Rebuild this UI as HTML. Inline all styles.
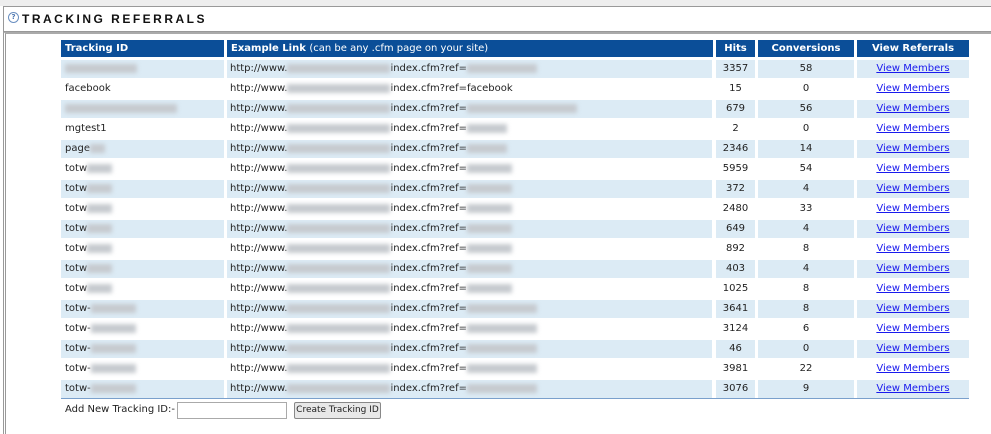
<!DOCTYPE html>
<html><head><style>
body{margin:0;width:991px;height:421px;background:#fff;font-family:"DejaVu Sans","Liberation Sans",sans-serif;font-size:10px;color:#222;position:relative;overflow:hidden}
.top{position:absolute;left:0;top:0;width:991px;height:6px;background:#eee}
.box1{position:absolute;left:3px;top:6px;width:990px;height:24px;border:1px solid #999;border-right:none;}
.box2{position:absolute;left:3px;top:32px;width:990px;height:400px;border-top:2px solid #aaa;border-left:3px double #999}
.title{position:absolute;left:22px;top:12px;font-family:"Liberation Sans",sans-serif;font-weight:bold;font-size:12px;letter-spacing:2.5px;color:#111}
.q{position:absolute;left:8px;top:12px;width:9px;height:9px;border:1px solid #6a8fc0;border-radius:50%;font-size:7px;line-height:9px;text-align:center;color:#4a75b0;font-weight:bold}
.c{position:absolute;height:18px;line-height:18px;white-space:nowrap;overflow:hidden}
.h{background:#0b4e98;color:#fff;font-weight:bold;height:17px;line-height:17px}
.b{display:inline-block;height:9px;background:#c6cacf;filter:blur(2px);vertical-align:middle}
a{color:#1a1aee;text-decoration:underline}
.line{position:absolute;left:61px;top:398px;width:908px;height:1px;background:#7aa0cc}
</style></head><body>
<div class="top"></div>
<div class="box1"></div>
<div class="q">?</div>
<div class="title">TRACKING REFERRALS</div>
<div class="box2"></div>
<div id="t"></div>
<div class="c h" style="left:61px;top:40px;width:159px;padding-left:4px">Tracking ID</div>
<div class="c h" style="left:227px;top:40px;width:482px;padding-left:4px">Example Link <span style="font-weight:normal">(can be any .cfm page on your site)</span></div>
<div class="c h" style="left:716px;top:40px;width:39px;text-align:center">Hits</div>
<div class="c h" style="left:758px;top:40px;width:96px;text-align:center">Conversions</div>
<div class="c h" style="left:857px;top:40px;width:112px;text-align:center">View Referrals</div>
<script>
var rows=[["",'<span class="b" style="width:72px"></span>',"",'<span class="b" style="width:70px"></span>',3357,58],
["facebook","","","facebook",15,0],
["",'<span class="b" style="width:112px"></span>',"",'<span class="b" style="width:110px"></span>',679,56],
["mgtest1","","",'<span class="b" style="width:40px"></span>',2,0],
["page",'<span class="b" style="width:15px"></span>',"",'<span class="b" style="width:40px"></span>',2346,14],
["totw",'<span class="b" style="width:25px"></span>',"",'<span class="b" style="width:45px"></span>',5959,54],
["totw",'<span class="b" style="width:25px"></span>',"",'<span class="b" style="width:45px"></span>',372,4],
["totw",'<span class="b" style="width:25px"></span>',"",'<span class="b" style="width:45px"></span>',2480,33],
["totw",'<span class="b" style="width:25px"></span>',"",'<span class="b" style="width:45px"></span>',649,4],
["totw",'<span class="b" style="width:25px"></span>',"",'<span class="b" style="width:45px"></span>',892,8],
["totw",'<span class="b" style="width:25px"></span>',"",'<span class="b" style="width:45px"></span>',403,4],
["totw",'<span class="b" style="width:25px"></span>',"",'<span class="b" style="width:45px"></span>',1025,8],
["totw-",'<span class="b" style="width:45px"></span>',"",'<span class="b" style="width:70px"></span>',3641,8],
["totw-",'<span class="b" style="width:45px"></span>',"",'<span class="b" style="width:70px"></span>',3124,6],
["totw-",'<span class="b" style="width:45px"></span>',"",'<span class="b" style="width:70px"></span>',46,0],
["totw-",'<span class="b" style="width:45px"></span>',"",'<span class="b" style="width:70px"></span>',3981,22],
["totw-",'<span class="b" style="width:45px"></span>',"",'<span class="b" style="width:70px"></span>',3076,9]];
var h="";
rows.forEach(function(r,i){var y=60+20*i;var bg=i%2==0?"#dcebf5":"#fff";var s="top:"+y+"px;background:"+bg+";";
h+='<div class="c" style="'+s+'left:61px;width:159px;padding-left:4px">'+r[0]+r[1]+'</div>';
h+='<div class="c" style="'+s+'left:227px;width:482px;padding-left:3px">http://www.<span class="b" style="width:103px"></span>index.cfm?ref='+r[3]+'</div>';
h+='<div class="c" style="'+s+'left:716px;width:39px;text-align:center">'+r[4]+'</div>';
h+='<div class="c" style="'+s+'left:758px;width:96px;text-align:center">'+r[5]+'</div>';
h+='<div class="c" style="'+s+'left:857px;width:112px;text-align:center"><a>View Members</a></div>';});
document.getElementById("t").innerHTML=h;
</script>
<div class="line"></div>
<div style="position:absolute;left:65px;top:404px">Add New Tracking ID:-</div>
<div style="position:absolute;left:177px;top:402px;width:108px;height:15px;border:1px solid #aaa;background:#fff"></div>
<div style="position:absolute;left:294px;top:402px;width:85px;height:15px;border:1px solid #888;background:#e8e8e8;border-radius:2px;font-size:9px;line-height:15px;text-align:center;white-space:nowrap;overflow:hidden">Create Tracking ID</div>
</body></html>
